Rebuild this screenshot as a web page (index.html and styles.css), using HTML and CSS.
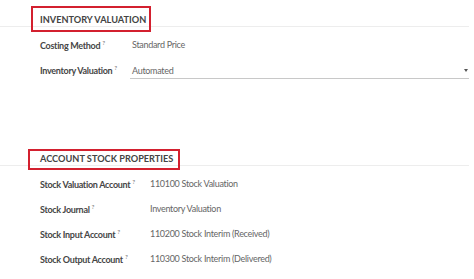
FILE: index.html
```html
<!DOCTYPE html>
<html>
<head>
    <title>Inventory Settings</title>
    <link rel="stylesheet" href="styles.css">
</head>
<body>

<div class="sheet">
    <div class="section">
        <div class="section-title">
            INVENTORY VALUATION
            <span class="mark mark-valuation"></span>
        </div>
        <div class="fields fields-valuation">
            <div class="label">Costing Method<sup>?</sup></div>
            <div class="value">Standard Price</div>
            <div class="label">Inventory Valuation<sup>?</sup></div>
            <div class="value select">Automated<span class="caret"></span></div>
        </div>
    </div>

    <div class="section section-accounts">
        <div class="section-title">
            ACCOUNT STOCK PROPERTIES
            <span class="mark mark-accounts"></span>
        </div>
        <div class="fields fields-accounts">
            <div class="label">Stock Valuation Account<sup>?</sup></div>
            <div class="value">110100 Stock Valuation</div>
            <div class="label">Stock Journal<sup>?</sup></div>
            <div class="value">Inventory Valuation</div>
            <div class="label">Stock Input Account<sup>?</sup></div>
            <div class="value">110200 Stock Interim (Received)</div>
            <div class="label">Stock Output Account<sup>?</sup></div>
            <div class="value">110300 Stock Interim (Delivered)</div>
        </div>
    </div>
</div>

</body>
</html>
```

FILE: styles.css
```css
body {
    margin: 0;
    background-color: #fff;
    font-family: Lato, "Liberation Sans", sans-serif;
    color: #4a4a4a;
}
.sheet {
    width: 469px;
}
.section-title {
    position: relative;
    padding: 14px 0 0 40px;
    height: 12px;
    line-height: 12px;
    font-size: 9.2px;
    font-weight: 700;
    white-space: nowrap;
    color: #444;
    border-bottom: 1px solid #ededed;
}
.section-accounts {
    margin-top: 57px;
}
.mark {
    position: absolute;
    box-sizing: border-box;
    border: 2px solid #d3202f;
}
.mark-valuation {
    left: 31px;
    top: 6px;
    width: 120px;
    height: 26px;
}
.mark-accounts {
    left: 28px;
    top: 10px;
    width: 152px;
    height: 21px;
}
.fields {
    display: grid;
    grid-auto-rows: 25px;
    align-items: center;
    margin-top: 5px;
    padding-left: 40px;
    font-size: 9px;
    white-space: nowrap;
}
.fields-valuation {
    grid-template-columns: 92px 1fr;
}
.fields-accounts {
    grid-template-columns: 110px 1fr;
}
.label {
    font-weight: 700;
    letter-spacing: -0.3px;
    color: #464646;
}
.label sup {
    font-size: 6.5px;
    font-weight: 400;
    letter-spacing: 0;
    color: #6f6f6f;
    margin-left: 2px;
}
.value {
    color: #666;
    letter-spacing: -0.3px;
}
.select {
    position: relative;
    margin-left: -2px;
    padding: 8px 0 2px 2px;
    border-bottom: 1.5px solid #c8c8c8;
    align-self: start;
}
.caret {
    position: absolute;
    right: 1px;
    top: 12px;
    border-left: 2.5px solid transparent;
    border-right: 2.5px solid transparent;
    border-top: 3px solid #555;
}
```
